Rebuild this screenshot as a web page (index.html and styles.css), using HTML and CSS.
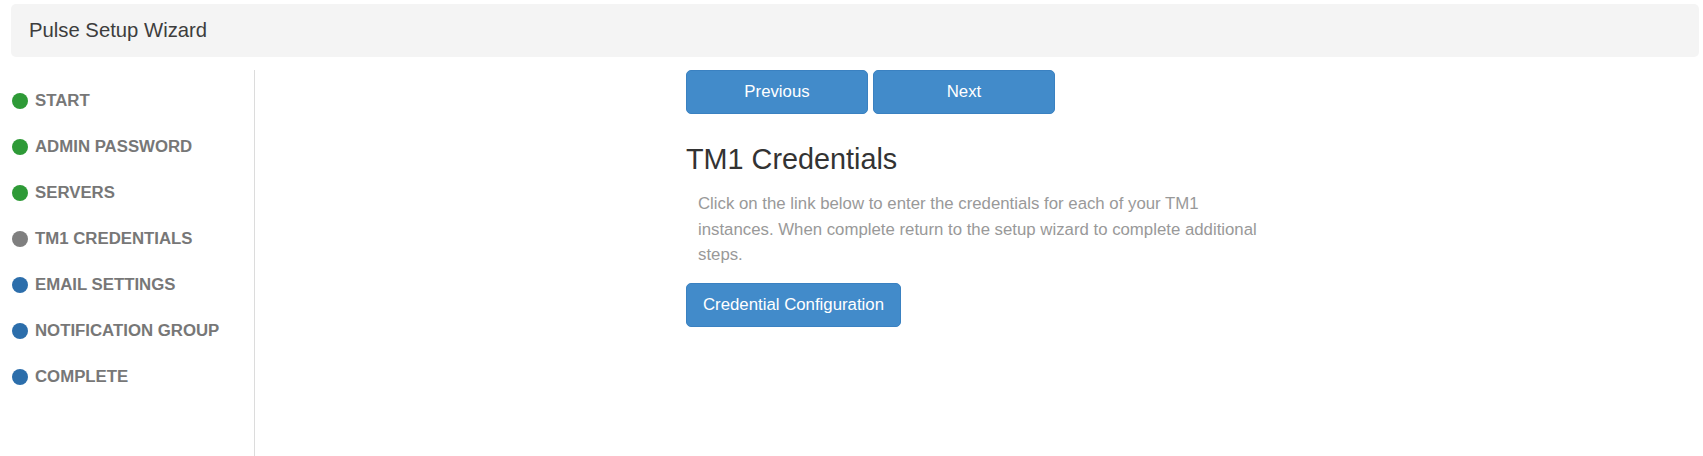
FILE: index.html
```html
<!DOCTYPE html>
<html lang="en">
<head>
<meta charset="utf-8">
<title>Pulse Setup Wizard</title>
<link rel="stylesheet" href="styles.css">
</head>
<body>
<header class="topbar">
  <span class="brand">Pulse Setup Wizard</span>
</header>
<div class="layout">
  <nav class="steps">
    <div class="step"><span class="dot dot-done"></span><span class="label">START</span></div>
    <div class="step"><span class="dot dot-done"></span><span class="label">ADMIN PASSWORD</span></div>
    <div class="step"><span class="dot dot-done"></span><span class="label">SERVERS</span></div>
    <div class="step"><span class="dot dot-current"></span><span class="label">TM1 CREDENTIALS</span></div>
    <div class="step"><span class="dot dot-todo"></span><span class="label">EMAIL SETTINGS</span></div>
    <div class="step"><span class="dot dot-todo"></span><span class="label">NOTIFICATION GROUP</span></div>
    <div class="step"><span class="dot dot-todo"></span><span class="label">COMPLETE</span></div>
  </nav>
  <main class="content">
    <div class="pager">
      <button class="btn btn-nav">Previous</button>
      <button class="btn btn-nav">Next</button>
    </div>
    <h3 class="title">TM1 Credentials</h3>
    <p class="desc">Click on the link below to enter the credentials for each of your TM1 instances. When complete return to the setup wizard to complete additional steps.</p>
    <button class="btn btn-config">Credential Configuration</button>
  </main>
</div>
</body>
</html>
```
FILE: styles.css
```css
* { box-sizing: border-box; }
html, body { margin: 0; padding: 0; background: #fff; }
body {
  font-family: "Liberation Sans", Arial, sans-serif;
  font-size: 16.8px;
  color: #333;
  height: 456px;
  overflow: hidden;
}
.topbar {
  margin: 4px 4px 0 11px;
  height: 53px;
  background: #f4f4f4;
  border-radius: 5px;
  display: flex;
  align-items: center;
  padding-left: 18px;
}
.brand {
  font-size: 20.3px;
  color: #3d3d3d;
}
.layout {
  display: flex;
  margin-top: 13px;
  height: 386px;
}
.steps {
  width: 255px;
  border-right: 1px solid #dcdcdc;
  padding: 8px 0 0 12px;
}
.step {
  height: 46px;
  display: flex;
  align-items: center;
}
.dot {
  width: 16px;
  height: 16px;
  border-radius: 50%;
  margin-right: 7px;
  flex: none;
}
.dot-done { background: #2e9a37; }
.dot-current { background: #7f7f7f; }
.dot-todo { background: #2c6eab; }
.label {
  font-weight: bold;
  color: #777;
  font-size: 16.8px;
}
.content {
  padding-left: 431px;
  width: 1031px;
}
.pager {
  display: flex;
  gap: 5px;
}
.btn {
  font-family: "Liberation Sans", Arial, sans-serif;
  font-size: 16.8px;
  color: #fff;
  background: #428bca;
  border: 1px solid #3a81c1;
  border-radius: 5px;
  height: 44px;
  cursor: pointer;
}
.btn-nav { width: 182px; }
.title {
  margin: 29px 0 0;
  font-size: 28.8px;
  font-weight: normal;
  line-height: 32px;
  color: #333;
}
.desc {
  margin: 16px 0 0;
  padding: 0 12px;
  line-height: 25.5px;
  color: #999;
}
.btn-config {
  margin-top: 15px;
  width: 215px;
  padding: 0;
}
```
